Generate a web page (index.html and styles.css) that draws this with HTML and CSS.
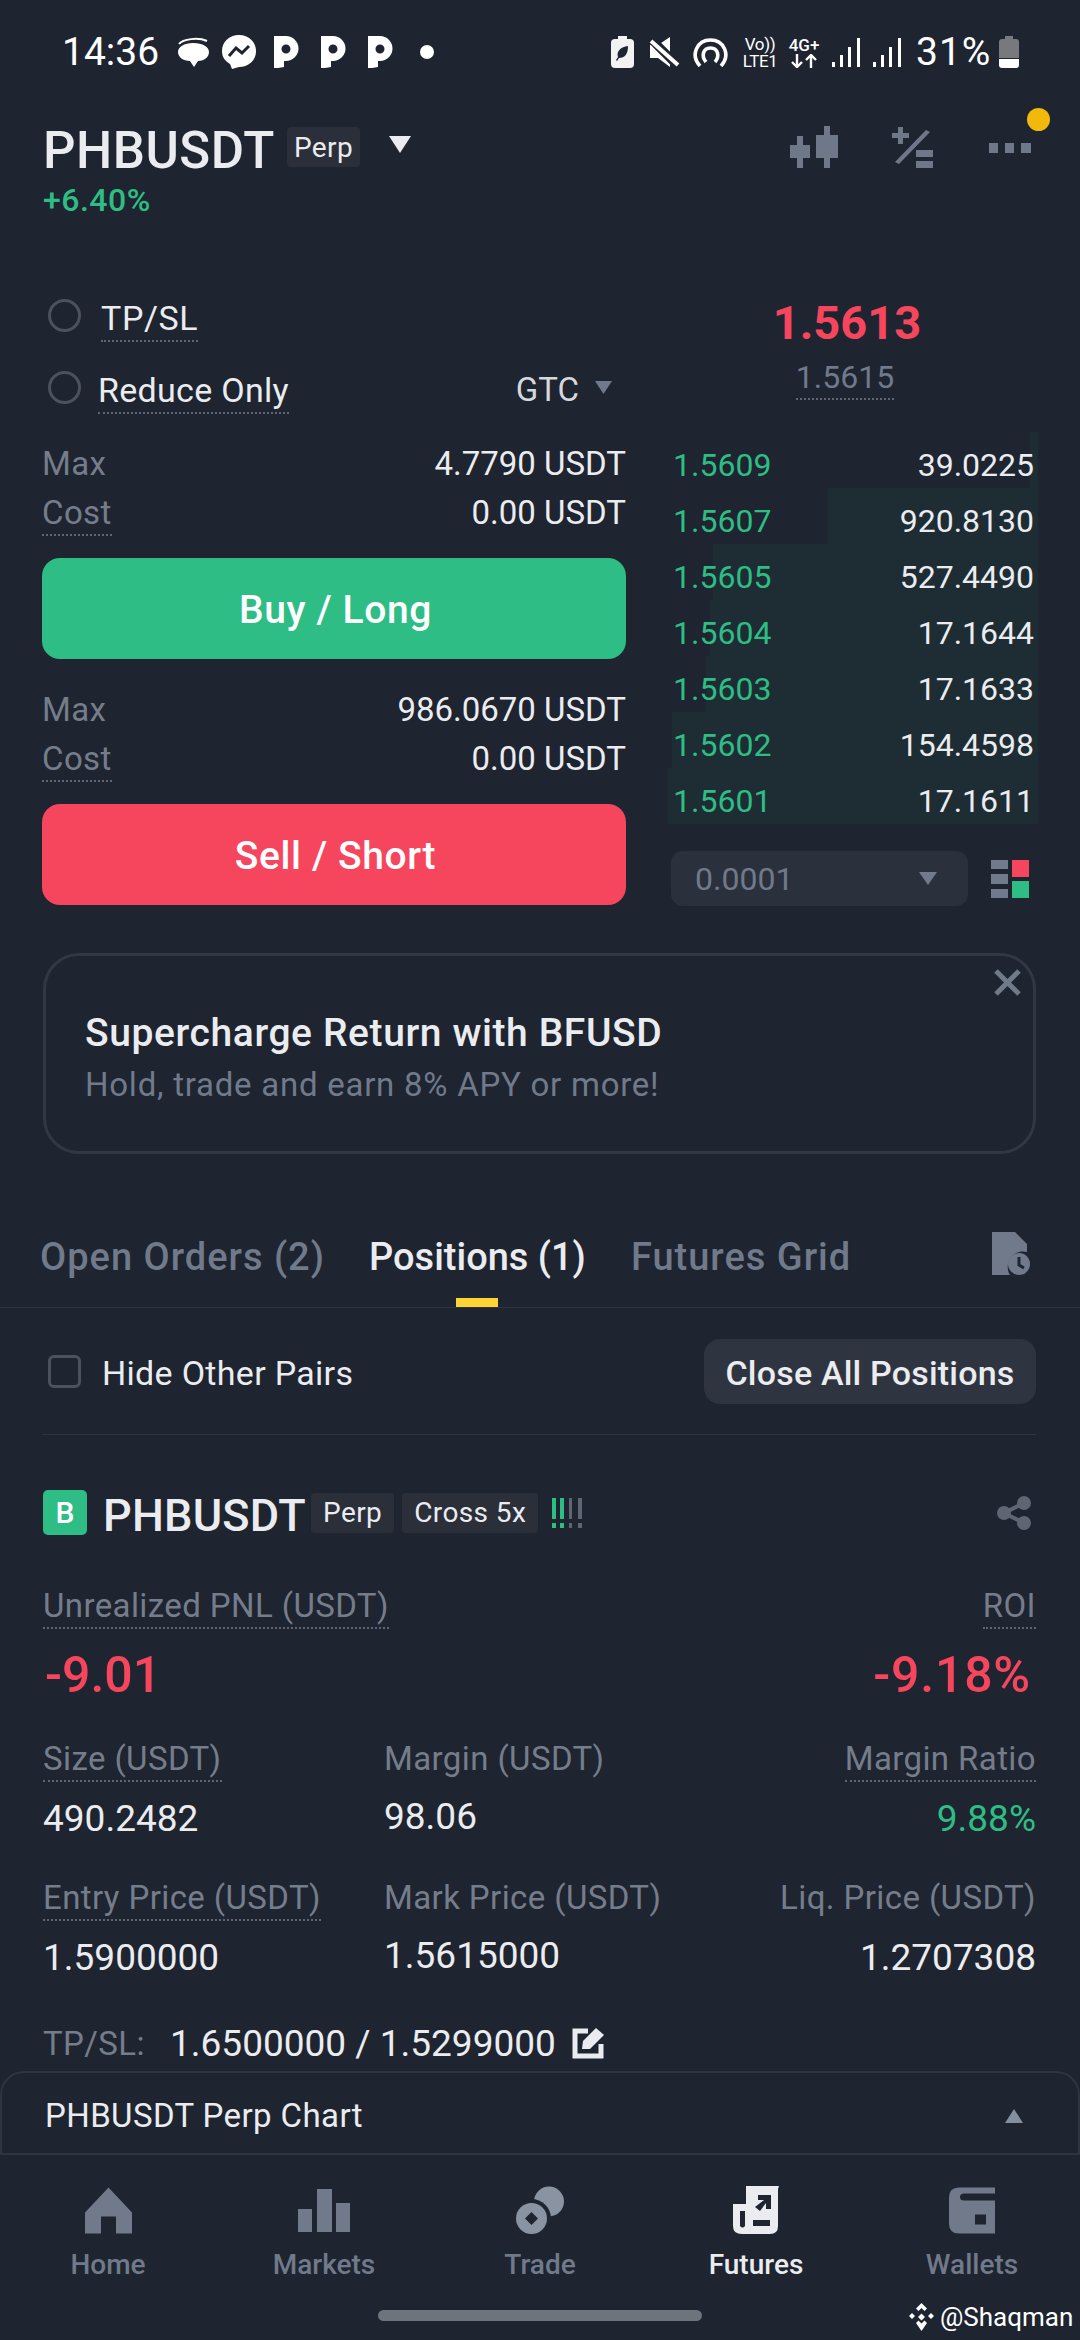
FILE: index.html
```html
<!DOCTYPE html>
<html lang="en">
<head>
<meta charset="utf-8">
<title>PHBUSDT Perp</title>
<link rel="stylesheet" href="styles.css">
</head>
<body>
<div class="app">
  <div class="status">
    <span class="clock">14:36</span>
    <svg class="s-chat" width="31" height="30" viewBox="0 0 31 30"><path fill="#fff" d="M15 6C25 6 31 10 31 15C31 21 25 24 20 24L16 30L12 24C5 24 0 20 0 15C0 10 6 6 15 6Z"/><path fill="none" stroke="#fff" stroke-width="2" d="M1 7C5 2 20 0 29 4"/></svg>
    <svg class="s-msg" width="34" height="34" viewBox="0 0 34 34"><path fill="#fff" d="M17 0C27 0 34 7 34 16C34 26 26 32 17 32L10 34L8 29C3 26 0 22 0 16C0 7 7 0 17 0Z"/><path fill="none" stroke="#1e2430" stroke-width="3" d="M7 21L14 13L20 18L27 11"/></svg>
    <svg class="s-p s-p1" width="25" height="32" viewBox="0 0 25 32"><path fill="#fff" fill-rule="evenodd" d="M0 0H12A12.500 12.500 0 0 1 12 25H10V31L4 32H0ZM12 8.500A4.500 4.500 0 1 0 12 17.500A4.500 4.500 0 1 0 12 8.500Z"/></svg>
    <svg class="s-p s-p2" width="25" height="32" viewBox="0 0 25 32"><path fill="#fff" fill-rule="evenodd" d="M0 0H12A12.500 12.500 0 0 1 12 25H10V31L4 32H0ZM12 8.500A4.500 4.500 0 1 0 12 17.500A4.500 4.500 0 1 0 12 8.500Z"/></svg>
    <svg class="s-p s-p3" width="25" height="32" viewBox="0 0 25 32"><path fill="#fff" fill-rule="evenodd" d="M0 0H12A12.500 12.500 0 0 1 12 25H10V31L4 32H0ZM12 8.500A4.500 4.500 0 1 0 12 17.500A4.500 4.500 0 1 0 12 8.500Z"/></svg>
    <span class="s-dot"></span>
    <div class="status-right">
      <svg class="s-leaf" width="23" height="32" viewBox="0 0 23 32"><path fill="#f2f2f2" d="M7 0H16V3H19Q23 3 23 7V28Q23 32 19 32H4Q0 32 0 28V7Q0 3 4 3H7Z"/><path fill="#1e2430" d="M17 10C17 18 14 22 8 22L6 25L5 24L7 21C5 15 10 11 17 10Z"/></svg>
      <svg class="s-mute" width="31" height="30" viewBox="0 0 31 30"><path fill="#fff" d="M1 8H9L21 0V30L9 21H1Z"/><path stroke="#1e2430" stroke-width="9" d="M0 0L30 30"/><path stroke="#fff" stroke-width="4" d="M2 4L29 28"/></svg>
      <svg class="s-hot" width="35" height="29" viewBox="0 0 35 29"><g fill="none" stroke="#fff" stroke-width="3.600"><path d="M7 28C-3 17 4 2 17.500 2C31 2 38 17 28 28"/><path d="M13 24C8 18 10 10 17.500 10C25 10 27 18 22 24"/></g></svg>
      <div class="s-net s-volte"><span>Vo))</span><span>LTE1</span></div>
      <div class="s-net s-4g"><span>4G+</span><svg width="34" height="14" viewBox="0 0 34 14"><path fill="none" stroke="#fff" stroke-width="2.400" d="M10 0V12M5 8L10 13L15 8M24 14V2M19 6L24 1L29 6"/></svg></div>
      <svg class="s-sig1" width="29" height="29" viewBox="0 0 29 29"><path fill="#fff" d="M0 24H3V29H0ZM8 17H11V29H8ZM16 9H19V29H16ZM25 0H28V29H25Z"/></svg>
      <svg class="s-sig2" width="29" height="29" viewBox="0 0 29 29"><path fill="#fff" d="M0 24H3V29H0ZM8 17H11V29H8ZM16 9H19V29H16ZM25 0H28V29H25Z"/></svg>
      <span class="s-pct">31%</span>
      <svg class="s-batt" width="20" height="32" viewBox="0 0 20 32"><path fill="#77797d" d="M6 0H14V3H17Q20 3 20 6V22H0V6Q0 3 3 3H6Z"/><path fill="#fff" d="M0 23H20V29Q20 32 17 32H3Q0 32 0 29Z"/></svg>
    </div>
  </div>

  <header class="head">
    <div class="head-main">
      <div class="head-title">
        <span class="pair">PHBUSDT</span>
        <span class="badge head-badge">Perp</span>
        <svg class="head-caret" width="22" height="17" viewBox="0 0 22 17"><path fill="#eaecef" d="M0 0H22L11 17Z"/></svg>
      </div>
      <div class="change">+6.40%</div>
    </div>
    <div class="head-icons">
      <svg class="ic-candle" width="48" height="42" viewBox="0 0 48 42"><path fill="#6f7888" d="M7 10H13V19H20V32H13V42H7V32H0V19H7ZM34 0H40V9H48V32H40V42H34V32H26V9H34Z"/></svg>
      <svg class="ic-calc" width="41" height="41" viewBox="0 0 41 41"><path fill="#6f7888" d="M6 0H11V6H17V11H11V17H6V11H0V6H6ZM24 23H41V30H24ZM24 34H41V41H24ZM34 3L38 5L7 37L3 35Z"/></svg>
      <div class="ic-more">
        <svg width="42" height="10" viewBox="0 0 42 10"><path fill="#6f7888" d="M0 0H9V10H0ZM16 0H25V10H16ZM32 0H42V10H32Z"/></svg>
        <span class="notify"></span>
      </div>
    </div>
  </header>

  <section class="trade">
    <div class="form">
      <div class="opt opt-a">
        <span class="radio"></span>
        <span class="dot-u opt-text opt-tp">TP/SL</span>
      </div>
      <div class="opt opt-b">
        <span class="radio"></span>
        <span class="dot-u opt-text opt-red">Reduce Only</span>
        <span class="gtc">GTC</span>
        <svg class="gtc-caret" width="17" height="13" viewBox="0 0 17 13"><path fill="#707a8a" d="M0 0H17L8.500 13Z"/></svg>
      </div>
      <div class="limit">
        <div class="limit-row"><span class="muted">Max</span><span>4.7790 USDT</span></div>
        <div class="limit-row"><span class="muted dot-u">Cost</span><span>0.00 USDT</span></div>
      </div>
      <button class="act buy">Buy / Long</button>
      <div class="limit limit-2">
        <div class="limit-row"><span class="muted">Max</span><span>986.0670 USDT</span></div>
        <div class="limit-row"><span class="muted dot-u">Cost</span><span>0.00 USDT</span></div>
      </div>
      <button class="act sell">Sell / Short</button>
    </div>

    <div class="book">
      <div class="last">1.5613</div>
      <div class="mark-wrap"><span class="mark dot-u">1.5615</span></div>
      <div class="bids">
        <div class="bid"><i class="depth" style="width:2.2%"></i><span class="bid-p">1.5609</span><span class="bid-q">39.0225</span></div>
        <div class="bid"><i class="depth" style="width:56.8%"></i><span class="bid-p">1.5607</span><span class="bid-q">920.8130</span></div>
        <div class="bid"><i class="depth" style="width:87.8%"></i><span class="bid-p">1.5605</span><span class="bid-q">527.4490</span></div>
        <div class="bid"><i class="depth" style="width:88.6%"></i><span class="bid-p">1.5604</span><span class="bid-q">17.1644</span></div>
        <div class="bid"><i class="depth" style="width:89.7%"></i><span class="bid-p">1.5603</span><span class="bid-q">17.1633</span></div>
        <div class="bid"><i class="depth" style="width:98.9%"></i><span class="bid-p">1.5602</span><span class="bid-q">154.4598</span></div>
        <div class="bid"><i class="depth" style="width:100%"></i><span class="bid-p">1.5601</span><span class="bid-q">17.1611</span></div>
      </div>
      <div class="book-foot">
        <div class="tick"><span>0.0001</span><svg width="18" height="13" viewBox="0 0 18 13"><path fill="#707a8a" d="M0 0H18L9 13Z"/></svg></div>
        <svg class="layout-ic" width="38" height="38" viewBox="0 0 38 38"><path fill="#707a8a" d="M0 0H17V9H0ZM0 14H17V24H0ZM0 29H17V38H0Z"/><path fill="#f6465d" d="M21 0H38V17H21Z"/><path fill="#2ebd85" d="M21 21H38V38H21Z"/></svg>
      </div>
    </div>
  </section>

  <section class="promo">
    <svg class="promo-x" width="27" height="27" viewBox="0 0 27 27"><path fill="none" stroke="#707a8a" stroke-width="5" d="M2 2L25 25M25 2L2 25"/></svg>
    <div class="promo-title">Supercharge Return with BFUSD</div>
    <div class="promo-sub">Hold, trade and earn 8% APY or more!</div>
  </section>

  <nav class="tabs">
    <div class="tab">Open Orders (2)</div>
    <div class="tab tab-on">Positions (1)<span class="tab-bar"></span></div>
    <div class="tab">Futures Grid</div>
    <svg class="tab-ic" width="38" height="44" viewBox="0 0 38 44"><path fill="#707a8a" d="M0 0H23L35 12V20C24 17 14 26 16 38Q16.500 41 18 43H0Z"/><circle cx="27" cy="32" r="11" fill="#707a8a"/><path fill="none" stroke="#1e2430" stroke-width="3" d="M27 25V33L32 36"/></svg>
  </nav>

  <div class="filter">
    <span class="check"></span>
    <span class="filter-label">Hide Other Pairs</span>
    <button class="close-all">Close All Positions</button>
  </div>
  <div class="rule"></div>

  <section class="pos">
    <div class="pos-head">
      <span class="side">B</span>
      <span class="pos-pair">PHBUSDT</span>
      <span class="badge">Perp</span>
      <span class="badge">Cross 5x</span>
      <svg class="risk" width="30" height="30" viewBox="0 0 30 30"><path fill="#2ebd85" d="M0 0H4V21H0ZM0 25H4V30H0ZM8 0H12V21H8ZM8 25H12V30H8Z"/><path fill="#5e6673" d="M17 0H20V21H17ZM17 25H20V30H17ZM26 0H30V21H26ZM26 25H30V30H26Z"/></svg>
      <svg class="share" width="34" height="34" viewBox="0 0 34 34"><g fill="#5e6673"><circle cx="27" cy="7" r="7"/><circle cx="7" cy="17" r="7"/><circle cx="27" cy="27" r="7"/></g><path fill="none" stroke="#5e6673" stroke-width="4" d="M27 7L7 17L27 27"/></svg>
    </div>

    <div class="pnl-labels">
      <span class="muted dot-u">Unrealized PNL (USDT)</span>
      <span class="muted dot-u">ROI</span>
    </div>
    <div class="pnl-values">
      <span class="pnl">-9.01</span>
      <span class="roi">-9.18%</span>
    </div>

    <div class="fields">
      <div class="field"><span class="muted dot-u">Size (USDT)</span><span class="val">490.2482</span></div>
      <div class="field"><span class="muted plain">Margin (USDT)</span><span class="val val-up">98.06</span></div>
      <div class="field field-r"><span class="muted dot-u">Margin Ratio</span><span class="val val-green">9.88%</span></div>
      <div class="field"><span class="muted dot-u">Entry Price (USDT)</span><span class="val">1.5900000</span></div>
      <div class="field"><span class="muted plain">Mark Price (USDT)</span><span class="val val-up">1.5615000</span></div>
      <div class="field field-r"><span class="muted plain">Liq. Price (USDT)</span><span class="val">1.2707308</span></div>
    </div>

    <div class="tpsl">
      <span class="muted">TP/SL:</span>
      <span class="tpsl-val">1.6500000 / 1.5299000</span>
      <svg width="32" height="31" viewBox="0 0 32 31"><path fill="none" stroke="#eaecef" stroke-width="5" d="M16 3H3V28H29V16"/><path fill="#eaecef" d="M24 0L32 7L18 21L10 21L11 13Z"/></svg>
    </div>
  </section>

  <div class="chart-bar">
    <span>PHBUSDT Perp Chart</span>
    <svg width="18" height="14" viewBox="0 0 18 14"><path fill="#848e9c" d="M9 0L18 14H0Z"/></svg>
  </div>

  <nav class="nav">
    <div class="nav-item">
      <svg width="47" height="46" viewBox="0 0 47 46"><path fill="#707a8a" d="M23.500 0L47 25V46H31V29H16V46H0V25Z"/></svg>
      <span>Home</span>
    </div>
    <div class="nav-item">
      <svg width="52" height="43" viewBox="0 0 52 43"><path fill="#707a8a" d="M0 20H14V43H0ZM19 0H34V43H19ZM38 14H52V43H38Z"/></svg>
      <span>Markets</span>
    </div>
    <div class="nav-item">
      <svg width="49" height="48" viewBox="0 0 49 48"><circle cx="33" cy="15" r="15" fill="#8a93a1"/><circle cx="15.500" cy="32" r="19.500" fill="#1e2430"/><circle cx="15.500" cy="32" r="15.500" fill="#8a93a1"/><path fill="#1e2430" d="M15.500 25.500L22 32L15.500 38.500L9 32Z"/></svg>
      <span>Trade</span>
    </div>
    <div class="nav-item nav-on">
      <svg width="47" height="49" viewBox="0 0 47 49"><path fill="#eaecef" d="M13 0H46L45 3V40Q45 48 37 48H9Q0 48 0 40V18H13Z"/><path fill="#1e2430" d="M7 25H12V40Q9.500 43 7 40ZM20 34H37V40H20ZM25 9H38V23H33V17L27 25L22 21L31 14H25Z"/></svg>
      <span>Futures</span>
    </div>
    <div class="nav-item">
      <svg width="46" height="46" viewBox="0 0 46 46"><path fill="#707a8a" d="M10 0H46V46H10Q0 46 0 36V10Q0 0 10 0Z"/><path fill="#1e2430" d="M15 6H46V13H15Q11 13 11 9.500T15 6ZM26 27H37V37H26Z"/></svg>
      <span>Wallets</span>
    </div>
  </nav>
  <div class="home-bar"></div>
  <div class="mark-wm">
    <svg width="27" height="28" viewBox="0 0 27 28"><path fill="#fff" d="M13.500 0L19 5.500L16.500 8L13.500 5L10.500 8L8 5.500ZM4 10L7 13L4 16L1 13ZM23 10L26 13L23 16L20 13ZM13.500 10.500L17 14L13.500 17.500L10 14ZM8 20L10.500 17.500L13.500 20.500L16.500 17.500L19 20L13.500 28Z"/></svg>
    <span>@Shaqman</span>
  </div>
</div>
</body>
</html>
```

FILE: styles.css
```css
* { box-sizing: border-box; }
html, body { margin: 0; padding: 0; }
body { background: #1e2430; }
.app {
  position: relative;
  width: 1080px;
  height: 2340px;
  overflow: hidden;
  background: #1e2430;
  color: #eaecef;
  font-family: Roboto, "Noto Sans", sans-serif;
  font-size: 33px;
}
button { font-family: inherit; border: 0; padding: 0; }
svg { display: block; flex: none; }

/* status bar */
.status { display: flex; align-items: center; height: 104px; padding-left: 62px; color: #fff; }
.clock { font-size: 39px; width: 96px; white-space: nowrap; }
.s-chat { margin-left: 20px; }
.s-msg { margin-left: 13px; }
.s-p1 { margin-left: 18px; }
.s-p2, .s-p3 { margin-left: 22px; }
.s-dot { width: 14px; height: 14px; border-radius: 50%; background: #fff; margin-left: 27px; }
.status-right { display: flex; align-items: center; margin-left: auto; padding-right: 61px; }
.s-mute { margin-left: 15px; }
.s-hot { margin-left: 13px; }
.s-net { display: flex; flex-direction: column; align-items: center; font-size: 17px; line-height: 16px; gap: 1px; }
.s-volte { width: 40px; margin-left: 12px; letter-spacing: -0.4px; }
.s-4g { width: 34px; margin-left: 7px; font-weight: 500; }
.s-sig1 { margin-left: 11px; }
.s-sig2 { margin-left: 12px; }
.s-pct { font-size: 39px; margin-left: 14px; letter-spacing: 1px; width: 74px; white-space: nowrap; }
.s-batt { margin-left: 9px; }

/* header */
.head { display: flex; justify-content: space-between; align-items: flex-start; padding: 23px 49px 0 43px; height: 112px; }
.head-title { display: flex; align-items: center; height: 40px; }
.pair { font-size: 51px; font-weight: 500; line-height: 40px; padding-left: 0; width: 233px; letter-spacing: 0.5px; padding-top: 8px; }
.badge { display: flex; align-items: center; justify-content: center; height: 40px; padding: 0 12px; background: #2a2f3a; border-radius: 4px; font-size: 28px; color: #eaecef; letter-spacing: 0.4px; }
.head-badge { margin-left: 11px; width: 73px; padding: 0; }
.head-caret { margin-left: 29px; margin-top: -5px; }
.change { font-size: 32px; color: #2ebd85; line-height: 32px; margin-top: 17px; font-weight: 500; letter-spacing: 0.5px; }
.head-icons { display: flex; align-items: flex-start; margin-top: -1px; }
.ic-calc { margin-left: 54px; margin-top: 1px; }
.ic-more { position: relative; margin-left: 56px; margin-top: 17px; }
.notify { position: absolute; top: -35px; left: 38px; width: 23px; height: 23px; border-radius: 50%; background: #f0b90b; }

/* trade */
.trade { display: grid; grid-template-columns: 584px 370px; column-gap: 42px; padding: 0 42px; margin-top: 74px; height: 616px; }
.form { padding-top: 7px; }
.dot-u { border-bottom: 2px dotted #5e6673; }
.opt { display: flex; align-items: flex-start; }
.opt-a { height: 71px; }
.opt-b { height: 75px; padding-top: 1px; }
.radio { width: 33px; height: 33px; border: 3px solid #4b525e; border-radius: 50%; margin-left: 6px; margin-top: 2px; }
.opt-text { font-size: 34px; line-height: 42px; height: 45px; letter-spacing: 0.2px; }
.opt-tp { margin-left: 20px; letter-spacing: 0.6px; }
.opt-red { margin-left: 17px; letter-spacing: 0.3px; }
.gtc { margin-left: auto; font-size: 33px; line-height: 42px; color: #d5d8dc; }
.gtc-caret { margin-left: 16px; margin-right: 14px; margin-top: 12px; }
.limit { display: flex; flex-direction: column; gap: 7px; }
.limit-2 { margin-top: 30px; }
.limit-row { display: flex; justify-content: space-between; align-items: flex-start; line-height: 42px; }
.muted { color: #757d8b; letter-spacing: 0.4px; }
.act { display: block; width: 100%; height: 101px; margin-top: 22px; padding: 3px 0 0 3px; border-radius: 18px; color: #fff; font-size: 39px; font-weight: 500; letter-spacing: 0.6px; }
.buy { background: #2ebd85; }
.sell { background: #f6465d; }

/* order book */
.book { padding-top: 8px; }
.last { font-size: 47px; line-height: 50px; font-weight: 700; color: #f6465d; text-align: center; margin-left: -12px; }
.mark-wrap { display: flex; justify-content: center; margin-top: 8px; margin-left: -16px; }
.mark { font-size: 32px; line-height: 42px; color: #707a8a; }
.bids { margin-top: 32px; }
.bid { position: relative; display: flex; justify-content: space-between; height: 56px; padding: 11px 4px 0 5px; line-height: 45px; font-size: 32px; }
.depth { position: absolute; top: 0; right: 0; bottom: 0; background: #1e2c34; }
.bid-p, .bid-q { position: relative; }
.bid-p { color: #2ebd85; }
.book-foot { display: flex; align-items: center; margin-top: 27px; padding-left: 3px; }
.tick { display: flex; align-items: center; justify-content: space-between; width: 297px; height: 55px; padding: 0 31px 0 24px; border-radius: 12px; background: #2b313c; color: #707a8a; font-size: 32px; }
.layout-ic { margin-left: 23px; }

/* promo */
.promo { position: relative; width: 993px; height: 201px; margin: 47px 0 0 43px; padding: 53px 0 0 39px; border: 3px solid #323843; border-radius: 36px; }
.promo-x { position: absolute; top: 13px; right: 12px; }
.promo-title { font-size: 39px; line-height: 48px; font-weight: 500; letter-spacing: 0.6px; white-space: nowrap; }
.promo-sub { font-size: 33px; line-height: 44px; margin-top: 6px; color: #707a8a; letter-spacing: 0.75px; }

/* tabs */
.tabs { display: flex; align-items: flex-start; height: 76px; margin-top: 78px; padding: 0 50px 0 40px; border-bottom: 1px solid #2f3540; font-size: 38px; color: #707a8a; }
.tab { display: flex; flex-direction: column; align-items: center; line-height: 50px; font-weight: 500; letter-spacing: 1px; }
.tab:nth-child(2) { margin-left: 44px; }
.tab:nth-child(3) { margin-left: 45px; }
.tab-on { color: #eaecef; letter-spacing: 0; }
.tab-bar { width: 42px; height: 9px; margin-top: 16px; background: #fcd535; }
.tab-ic { margin-left: auto; }

/* filter */
.filter { display: flex; align-items: center; height: 65px; margin: 31px 44px 30px 48px; }
.check { width: 33px; height: 33px; border: 3px solid #4b525e; border-radius: 6px; }
.filter-label { margin-left: 21px; padding-top: 3px; font-size: 34px; letter-spacing: 0.3px; }
.close-all { margin-left: auto; width: 332px; height: 65px; padding-top: 3px; border-radius: 16px; background: #2f3540; color: #eaecef; font-size: 34px; font-weight: 500; letter-spacing: 0.2px; }
.rule { height: 1px; margin: 0 44px 0 43px; background: #2f3540; }

/* position */
.pos { padding: 55px 44px 0 43px; }
.pos-head { display: flex; align-items: center; height: 45px; }
.side { display: flex; align-items: center; justify-content: center; width: 44px; height: 45px; border-radius: 5px; background: #2ebd85; color: #fff; font-size: 30px; font-weight: 500; }
.pos-pair { margin-left: 16px; margin-right: 8px; font-size: 45px; font-weight: 500; line-height: 45px; padding-top: 6px; width: 200px; letter-spacing: 0.2px; white-space: nowrap; }
.pos-head .badge + .badge { margin-left: 8px; }
.risk { margin-left: 14px; }
.share { margin-left: auto; margin-right: 5px; }
.pnl-labels { display: flex; justify-content: space-between; align-items: flex-start; margin-top: 50px; line-height: 42px; }
.pnl-values { display: flex; justify-content: space-between; margin-top: 16px; line-height: 60px; color: #f6465d; font-weight: 500; }
.pnl { font-size: 50px; padding-left: 2px; }
.roi { font-size: 50px; letter-spacing: 0.8px; padding-right: 5px; }
.fields { display: grid; grid-template-columns: 341px 1fr 1fr; row-gap: 33px; margin-top: 33px; }
.field { display: flex; flex-direction: column; align-items: flex-start; }
.field .muted { line-height: 42px; }
.field .plain { padding-bottom: 2px; }
.field-r { align-items: flex-end; }
.val { font-size: 37px; line-height: 50px; margin-top: 12px; }
.val-up { margin-top: 10px; margin-bottom: 2px; }
.val-green { color: #2ebd85; }
.tpsl { display: flex; align-items: center; height: 50px; margin-top: 35px; }
.tpsl .muted { width: 127px; }
.tpsl-val { font-size: 37px; width: 402px; white-space: nowrap; }

/* chart bar */
.chart-bar { display: flex; justify-content: space-between; align-items: center; height: 84px; margin-top: 3px; padding: 5px 55px 0 43px; border: 2px solid #2f3540; border-radius: 24px 24px 0 0; font-size: 33px; letter-spacing: 0.4px; }

/* bottom nav */
.nav { display: grid; grid-template-columns: repeat(5, 216px); padding-top: 31px; }
.nav-item { display: flex; flex-direction: column; align-items: center; color: #707a8a; font-size: 28px; font-weight: 500; }
.nav-item svg { height: 49px; }
.nav-item span { margin-top: 12px; line-height: 36px; }
.nav-on { color: #eaecef; }
.home-bar { width: 324px; height: 11px; margin: 27px auto 0; border-radius: 6px; background: #6d747c; }
.mark-wm { position: absolute; left: 908px; top: 2302px; display: flex; align-items: center; gap: 5px; color: #fff; font-size: 26px; white-space: nowrap; }
```
